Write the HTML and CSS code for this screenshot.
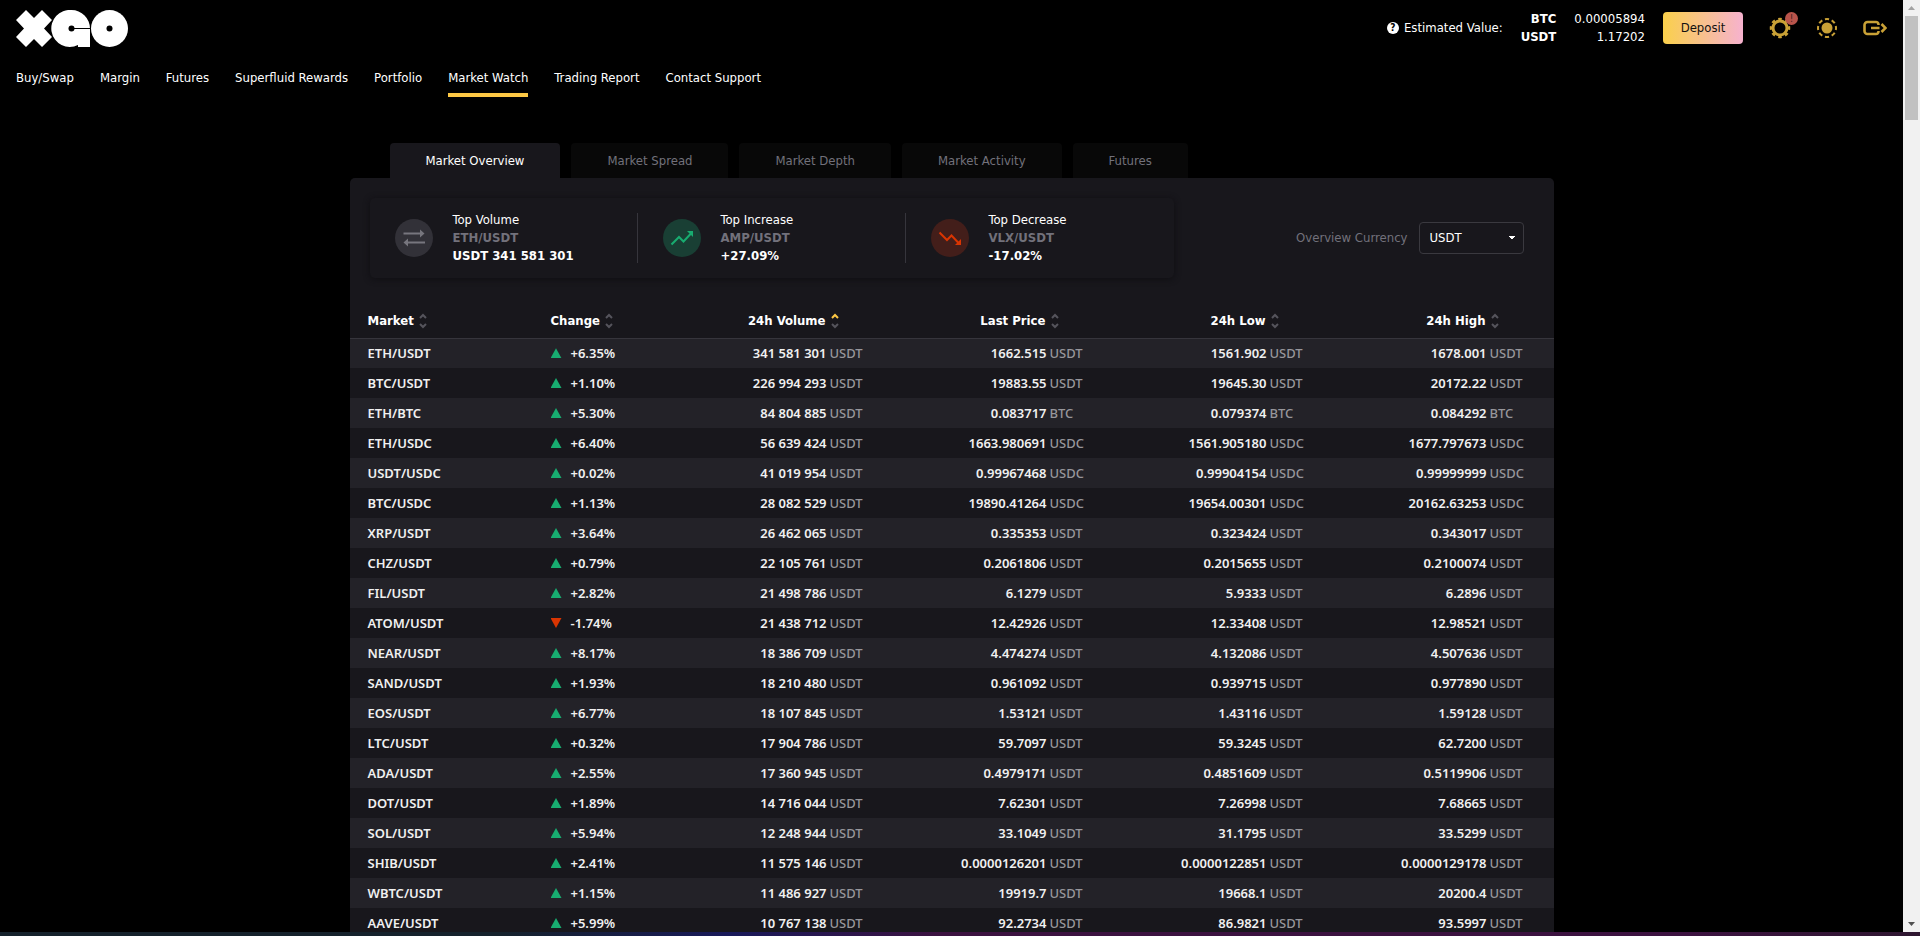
FILE: index.html
```html
<!DOCTYPE html>
<html lang="en">
<head>
<meta charset="utf-8">
<title>XGO - Market Watch</title>
<link rel="stylesheet" href="styles.css">
</head>
<body>
<svg class="symbols" aria-hidden="true">
  <symbol id="sort" viewBox="0 0 8 16">
    <path class="sort-up" d="M1 5 4 2l3 3"/>
    <path class="sort-down" d="M1 11l3 3 3-3"/>
  </symbol>
</svg>
<div class="window">
  <div class="page">
    <header class="header">
      <a class="logo" href="#" aria-label="XGO">
        <svg width="112" height="37" viewBox="0 0 112 37">
          <path fill="#fff" d="M10 0 18 8 26 0 36 10 28 18.500 36 27 26 37 18 29 10 37 0 27 8 18.500 0 10Z"/>
          <path fill="#fff" d="M55.500 0A18.500 18.500 0 0 1 74 18.500V37H62V35A18.500 18.500 0 1 1 55.500 0Z"/>
          <path d="M56 18.500H74" stroke="#000" stroke-width="1"/>
          <circle cx="55.500" cy="18.500" r="3"/>
          <circle cx="93.500" cy="18.500" r="18.500" fill="#fff"/>
          <circle cx="93.500" cy="18.500" r="3"/>
        </svg>
      </a>
      <div class="account">
        <div class="estimate">
          <span class="help" aria-hidden="true">?</span>
          <span>Estimated Value:</span>
        </div>
        <dl class="balances">
          <dt>BTC</dt><dd>0.00005894</dd>
          <dt>USDT</dt><dd>1.17202</dd>
        </dl>
        <button class="deposit" type="button">Deposit</button>
        <div class="tools">
          <button class="tool" type="button" aria-label="Settings">
            <svg width="22" height="22" viewBox="0 0 22 22" fill="none" stroke="#c9a136">
              <circle cx="11" cy="11" r="7" stroke-width="3"/>
              <circle cx="11" cy="11" r="9" stroke-width="2.500" pathLength="80" stroke-dasharray="5 5" stroke-dashoffset="2.500"/>
            </svg>
            <span class="alert">!</span>
          </button>
          <button class="tool" type="button" aria-label="Theme">
            <svg width="22" height="22" viewBox="0 0 22 22" fill="none" stroke="#c9a136">
              <circle cx="11" cy="11" r="5.500" fill="#c9a136" stroke="none"/>
              <circle cx="11" cy="11" r="9" stroke-width="2" pathLength="80" stroke-dasharray="6 4" stroke-dashoffset="3"/>
            </svg>
          </button>
          <button class="tool" type="button" aria-label="Log out">
            <svg width="24" height="16" viewBox="0 0 24 16" fill="none" stroke="#c9a136" stroke-width="2.600">
              <path d="M15.500 5V4.500a2.500 2.500 0 0 0-2.500-2.500H4.500a3 3 0 0 0-3 3v6a3 3 0 0 0 3 3H13a2.500 2.500 0 0 0 2.500-2.500V11M8 8h8.500M18.500 4l4 4-4 4"/>
            </svg>
          </button>
        </div>
      </div>
    </header>

    <nav class="nav">
      <a href="#">Buy/Swap</a>
      <a href="#">Margin</a>
      <a href="#">Futures</a>
      <a href="#">Superfluid Rewards</a>
      <a href="#">Portfolio</a>
      <a class="current" href="#" aria-current="page">Market Watch</a>
      <a href="#">Trading Report</a>
      <a href="#">Contact Support</a>
    </nav>

    <main class="market">
      <div class="tabs" role="tablist">
        <button class="tab active" type="button" role="tab" aria-selected="true">Market Overview</button>
        <button class="tab" type="button" role="tab">Market Spread</button>
        <button class="tab" type="button" role="tab">Market Depth</button>
        <button class="tab" type="button" role="tab">Market Activity</button>
        <button class="tab" type="button" role="tab">Futures</button>
      </div>
      <section class="panel">
        <div class="summary">
          <div class="cards">
            <div class="card">
              <svg class="badge" width="38" height="38" viewBox="0 0 38 38" fill="none">
                <circle cx="19" cy="19" r="19" fill="#323138"/>
                <path stroke="#77767e" stroke-width="2" d="M8.500 14.500H26M12 23.500H30"/>
                <path fill="#77767e" d="M25 10.500l4.500 4-4.500 4zM13 19.500l-4.500 4 4.500 4z"/>
              </svg>
              <div class="figures">
                <span>Top Volume</span>
                <span class="pair">ETH/USDT</span>
                <strong>USDT 341 581 301</strong>
              </div>
            </div>
            <div class="card">
              <svg class="badge" width="38" height="38" viewBox="0 0 38 38" fill="none">
                <circle cx="19" cy="19" r="19" fill="#193f34"/>
                <path stroke="#18ac70" stroke-width="2" d="M8.500 25.500l7.500-7.500 4.500 4.500 7.500-8"/>
                <path fill="#18ac70" d="M24 12h6v6z"/>
              </svg>
              <div class="figures">
                <span>Top Increase</span>
                <span class="pair">AMP/USDT</span>
                <strong>+27.09%</strong>
              </div>
            </div>
            <div class="card">
              <svg class="badge" width="38" height="38" viewBox="0 0 38 38" fill="none">
                <circle cx="19" cy="19" r="19" fill="#431e1a"/>
                <path stroke="#d93502" stroke-width="2" d="M8.500 13.500l7.500 7.500 4.500-4.500 7.500 8"/>
                <path fill="#d93502" d="M24 26h6v-6z"/>
              </svg>
              <div class="figures">
                <span>Top Decrease</span>
                <span class="pair">VLX/USDT</span>
                <strong>-17.02%</strong>
              </div>
            </div>
          </div>
          <div class="currency">
            <label for="currency">Overview Currency</label>
            <select id="currency"><option>USDT</option></select>
          </div>
        </div>

        <table class="rates">
          <colgroup><col class="col-market"><col class="col-change"><col><col><col><col></colgroup>
          <thead>
            <tr>
              <th><button type="button">Market<svg class="sort"><use href="#sort"/></svg></button></th>
              <th><button type="button">Change<svg class="sort"><use href="#sort"/></svg></button></th>
              <th class="num"><button type="button">24h Volume<svg class="sort sorted"><use href="#sort"/></svg></button></th>
              <th class="num"><button type="button">Last Price<svg class="sort"><use href="#sort"/></svg></button></th>
              <th class="num"><button type="button">24h Low<svg class="sort"><use href="#sort"/></svg></button></th>
              <th class="num"><button type="button">24h High<svg class="sort"><use href="#sort"/></svg></button></th>
            </tr>
          </thead>
          <tbody>
            <tr><td>ETH/USDT</td><td class="up">+6.35%</td><td class="num">341 581 301<i>USDT</i></td><td class="num">1662.515<i>USDT</i></td><td class="num">1561.902<i>USDT</i></td><td class="num">1678.001<i>USDT</i></td></tr>
            <tr><td>BTC/USDT</td><td class="up">+1.10%</td><td class="num">226 994 293<i>USDT</i></td><td class="num">19883.55<i>USDT</i></td><td class="num">19645.30<i>USDT</i></td><td class="num">20172.22<i>USDT</i></td></tr>
            <tr><td>ETH/BTC</td><td class="up">+5.30%</td><td class="num">84 804 885<i>USDT</i></td><td class="num">0.083717<i>BTC</i></td><td class="num">0.079374<i>BTC</i></td><td class="num">0.084292<i>BTC</i></td></tr>
            <tr><td>ETH/USDC</td><td class="up">+6.40%</td><td class="num">56 639 424<i>USDT</i></td><td class="num">1663.980691<i>USDC</i></td><td class="num">1561.905180<i>USDC</i></td><td class="num">1677.797673<i>USDC</i></td></tr>
            <tr><td>USDT/USDC</td><td class="up">+0.02%</td><td class="num">41 019 954<i>USDT</i></td><td class="num">0.99967468<i>USDC</i></td><td class="num">0.99904154<i>USDC</i></td><td class="num">0.99999999<i>USDC</i></td></tr>
            <tr><td>BTC/USDC</td><td class="up">+1.13%</td><td class="num">28 082 529<i>USDT</i></td><td class="num">19890.41264<i>USDC</i></td><td class="num">19654.00301<i>USDC</i></td><td class="num">20162.63253<i>USDC</i></td></tr>
            <tr><td>XRP/USDT</td><td class="up">+3.64%</td><td class="num">26 462 065<i>USDT</i></td><td class="num">0.335353<i>USDT</i></td><td class="num">0.323424<i>USDT</i></td><td class="num">0.343017<i>USDT</i></td></tr>
            <tr><td>CHZ/USDT</td><td class="up">+0.79%</td><td class="num">22 105 761<i>USDT</i></td><td class="num">0.2061806<i>USDT</i></td><td class="num">0.2015655<i>USDT</i></td><td class="num">0.2100074<i>USDT</i></td></tr>
            <tr><td>FIL/USDT</td><td class="up">+2.82%</td><td class="num">21 498 786<i>USDT</i></td><td class="num">6.1279<i>USDT</i></td><td class="num">5.9333<i>USDT</i></td><td class="num">6.2896<i>USDT</i></td></tr>
            <tr><td>ATOM/USDT</td><td class="down">-1.74%</td><td class="num">21 438 712<i>USDT</i></td><td class="num">12.42926<i>USDT</i></td><td class="num">12.33408<i>USDT</i></td><td class="num">12.98521<i>USDT</i></td></tr>
            <tr><td>NEAR/USDT</td><td class="up">+8.17%</td><td class="num">18 386 709<i>USDT</i></td><td class="num">4.474274<i>USDT</i></td><td class="num">4.132086<i>USDT</i></td><td class="num">4.507636<i>USDT</i></td></tr>
            <tr><td>SAND/USDT</td><td class="up">+1.93%</td><td class="num">18 210 480<i>USDT</i></td><td class="num">0.961092<i>USDT</i></td><td class="num">0.939715<i>USDT</i></td><td class="num">0.977890<i>USDT</i></td></tr>
            <tr><td>EOS/USDT</td><td class="up">+6.77%</td><td class="num">18 107 845<i>USDT</i></td><td class="num">1.53121<i>USDT</i></td><td class="num">1.43116<i>USDT</i></td><td class="num">1.59128<i>USDT</i></td></tr>
            <tr><td>LTC/USDT</td><td class="up">+0.32%</td><td class="num">17 904 786<i>USDT</i></td><td class="num">59.7097<i>USDT</i></td><td class="num">59.3245<i>USDT</i></td><td class="num">62.7200<i>USDT</i></td></tr>
            <tr><td>ADA/USDT</td><td class="up">+2.55%</td><td class="num">17 360 945<i>USDT</i></td><td class="num">0.4979171<i>USDT</i></td><td class="num">0.4851609<i>USDT</i></td><td class="num">0.5119906<i>USDT</i></td></tr>
            <tr><td>DOT/USDT</td><td class="up">+1.89%</td><td class="num">14 716 044<i>USDT</i></td><td class="num">7.62301<i>USDT</i></td><td class="num">7.26998<i>USDT</i></td><td class="num">7.68665<i>USDT</i></td></tr>
            <tr><td>SOL/USDT</td><td class="up">+5.94%</td><td class="num">12 248 944<i>USDT</i></td><td class="num">33.1049<i>USDT</i></td><td class="num">31.1795<i>USDT</i></td><td class="num">33.5299<i>USDT</i></td></tr>
            <tr><td>SHIB/USDT</td><td class="up">+2.41%</td><td class="num">11 575 146<i>USDT</i></td><td class="num">0.0000126201<i>USDT</i></td><td class="num">0.0000122851<i>USDT</i></td><td class="num">0.0000129178<i>USDT</i></td></tr>
            <tr><td>WBTC/USDT</td><td class="up">+1.15%</td><td class="num">11 486 927<i>USDT</i></td><td class="num">19919.7<i>USDT</i></td><td class="num">19668.1<i>USDT</i></td><td class="num">20200.4<i>USDT</i></td></tr>
            <tr><td>AAVE/USDT</td><td class="up">+5.99%</td><td class="num">10 767 138<i>USDT</i></td><td class="num">92.2734<i>USDT</i></td><td class="num">86.9821<i>USDT</i></td><td class="num">93.5997<i>USDT</i></td></tr>
          </tbody>
        </table>
      </section>
    </main>
  </div>
  <div class="scrollbar" aria-hidden="true">
    <span class="arrow-up"></span>
    <span class="thumb"></span>
    <span class="arrow-down"></span>
  </div>
</div>
<div class="edge"></div>
</body>
</html>
```
FILE: styles.css
```css
* {
  box-sizing: border-box;
}

body {
  display: flex;
  flex-direction: column;
  height: 100vh;
  margin: 0;
  overflow: hidden;
  background: #000;
  color: #fff;
  font: 13px/18px "DejaVu Sans Condensed", "DejaVu Sans", sans-serif;
}

button,
select {
  margin: 0;
  padding: 0;
  border: 0;
  background: none;
  color: inherit;
  font: inherit;
}

a {
  color: inherit;
  text-decoration: none;
}

.symbols {
  display: none;
}

.window {
  display: flex;
  flex: 1;
  min-height: 0;
}

.page {
  flex: 1;
  overflow: hidden;
}

.header {
  display: flex;
  align-items: flex-start;
  justify-content: space-between;
  padding: 10px 16px 0;
}

.logo svg {
  display: block;
}

.account {
  display: flex;
  align-items: center;
}

.estimate {
  display: flex;
  align-items: center;
  gap: 5px;
  margin-right: 18px;
}

.help {
  width: 12px;
  height: 12px;
  border-radius: 50%;
  background: #fff;
  color: #000;
  font-size: 10px;
  font-weight: bold;
  line-height: 12px;
  text-align: center;
}

.balances {
  display: grid;
  grid-template-columns: auto auto;
  column-gap: 18px;
  margin: 0 18px 0 0;
  text-align: right;
}

.balances dt,
.pair {
  font-weight: bold;
}

.balances dd {
  margin: 0;
}

.deposit {
  width: 80px;
  height: 32px;
  border-radius: 4px;
  background: linear-gradient(90deg, #fad04b, #f6b2cf);
  color: #111;
}

.tools {
  display: flex;
  align-items: center;
  gap: 25px;
  margin-left: 26px;
}

.tool {
  position: relative;
  display: flex;
}

.alert {
  position: absolute;
  top: -5px;
  right: -7px;
  width: 13px;
  height: 13px;
  border-radius: 50%;
  background: #b9544b;
  color: #4a1f1f;
  font-size: 10px;
  line-height: 13px;
}

.nav {
  display: flex;
  gap: 26px;
  padding: 22px 16px 0;
}

.nav a {
  padding-bottom: 6px;
  border-bottom: 4px solid transparent;
}

.nav .current {
  border-color: #fdc844;
}

.market {
  max-width: 1204px;
  margin: 46px auto 0;
}

.tabs {
  display: flex;
  gap: 11px;
  padding: 0 40px;
}

.tab {
  height: 35px;
  padding: 0 36px;
  border-radius: 4px 4px 0 0;
  background: #080808;
  color: #72717b;
}

.tab.active {
  background: #18171c;
  color: #fff;
}

.panel {
  padding-top: 20px;
  border-radius: 5px 5px 0 0;
  background: #18171c;
}

.summary {
  display: flex;
  align-items: center;
  justify-content: space-between;
  padding: 0 30px 0 20px;
}

.cards {
  display: flex;
  padding: 15px 0;
  border-radius: 5px;
  box-shadow: 0 1px 6px #0f0e12;
}

.card {
  display: flex;
  align-items: center;
  gap: 20px;
  width: 268px;
  height: 50px;
  padding-left: 25px;
}

.card:not(:last-child) {
  border-right: 1px solid #36353c;
}

.figures {
  display: flex;
  flex-direction: column;
}

.pair,
.currency label {
  color: #72717b;
}

.currency {
  display: flex;
  align-items: center;
  gap: 11px;
}

.currency select {
  width: 105px;
  height: 32px;
  padding-left: 10px;
  border: 1px solid #3a393f;
  border-radius: 4px;
  appearance: none;
  background: linear-gradient(to bottom right, #fff 50%, transparent 50%) right 8px center / 3px 4px no-repeat,
    linear-gradient(to bottom left, #fff 50%, transparent 50%) right 11px center / 3px 4px no-repeat;
}

.rates {
  width: 100%;
  margin-top: 27px;
  border-collapse: collapse;
  table-layout: fixed;
}

.col-market {
  width: 183px;
}

.col-change {
  width: 141px;
}

.rates th,
.rates td {
  height: 30px;
  padding: 0 0 0 18px;
  text-align: left;
  white-space: pre;
}

.rates th {
  height: 33px;
  padding-bottom: 1px;
  border-bottom: 1px solid #36353c;
}

.rates th button {
  display: inline-flex;
  align-items: center;
  gap: 5px;
}

.rates .num {
  text-align: right;
}

.rates th.num {
  padding-right: 55px;
}

.sort {
  width: 8px;
  height: 16px;
  fill: none;
  stroke-width: 2;
  --up: #55545c;
}

.sort.sorted {
  --up: #fdc844;
}

.sort-up {
  stroke: var(--up);
}

.sort-down {
  stroke: #55545c;
}

.rates td {
  color: #f0f0f0;
  font-family: "Noto Sans", sans-serif;
  font-weight: 600;
}

.rates td i {
  display: inline-block;
  width: 64px;
  margin-left: 3px;
  color: #97969b;
  font-style: normal;
  font-weight: 500;
  text-align: left;
}

.rates tbody tr:nth-child(odd) {
  background: #232228;
}

.up::before,
.down::before {
  content: "";
  display: inline-block;
  width: 11px;
  height: 10px;
  margin-right: 9px;
  background: #18ac70;
  clip-path: polygon(50% 0, 100% 100%, 0 100%);
}

.down::before {
  background: #d93502;
  clip-path: polygon(0 0, 100% 0, 50% 100%);
}

.scrollbar {
  display: flex;
  flex-direction: column;
  align-items: center;
  width: 17px;
  padding: 6px 0;
  background: #f1f1f1;
}

.arrow-up,
.arrow-down {
  width: 7px;
  height: 4px;
  background: #a3a3a3;
  clip-path: polygon(50% 0, 100% 100%, 0 100%);
}

.arrow-down {
  margin-top: auto;
  background: #505050;
  clip-path: polygon(0 0, 100% 0, 50% 100%);
}

.thumb {
  width: 13px;
  height: 104px;
  margin-top: 6px;
  background: #c1c1c1;
}

.edge {
  height: 4px;
  background: linear-gradient(90deg, #15222c 0, #15222c 26%, #18195a 38%, #3c1240 49%, #3c1240 88%, #2e1630);
}
```
